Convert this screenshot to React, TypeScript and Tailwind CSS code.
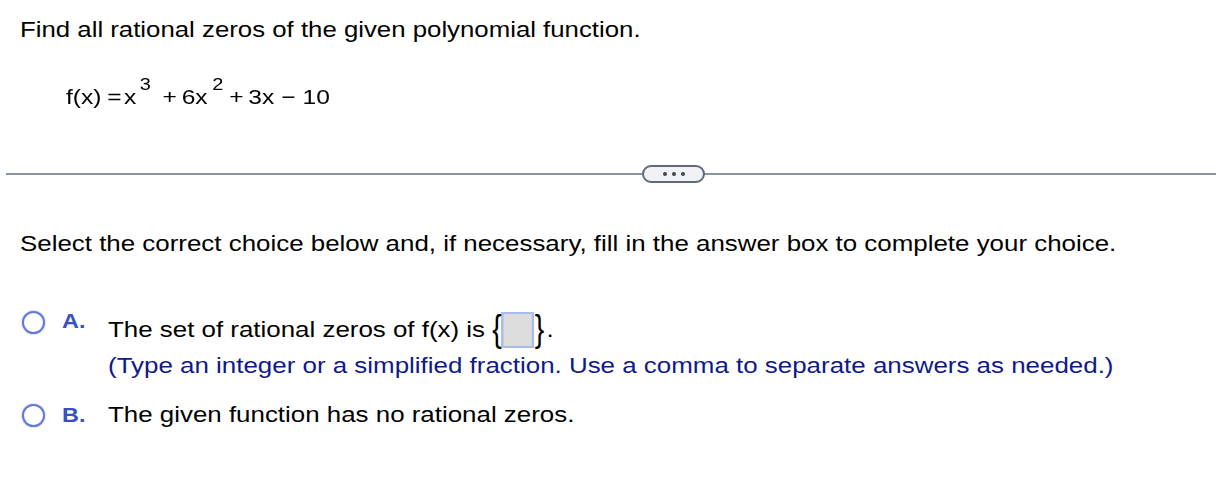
import React from "react";

const font = { fontFamily: '"Liberation Sans", Arial, Helvetica, sans-serif' };

function Radio() {
  return (
    <div className="w-[23px] h-[23px] rounded-full border-2 border-[#6579d6] bg-white shadow-[0_0_2px_rgba(90,110,210,0.6)]" />
  );
}

export default function App() {
  return (
    <div className="w-[1216px] h-[484px] bg-white text-black overflow-hidden" style={font}>
      <div className="pl-[20px] pt-[17px]">
        <div className="origin-left scale-x-[1.172] text-[22px] leading-[26px] whitespace-nowrap">
          Find all rational zeros of the given polynomial function.
        </div>
      </div>
      <div className="pl-[66px] mt-[42px]">
        <div className="origin-left scale-x-[1.17] text-[21px] leading-[24px] flex items-baseline whitespace-pre">
          <span>f(x)</span>
          <span className="ml-[5px]">=</span>
          <span className="ml-[2px]">x</span>
          <span className="ml-[3px] text-[17px] relative top-[-14px]">3</span>
          <span className="ml-[10px]">+</span>
          <span className="ml-[4px]">6x</span>
          <span className="ml-[4px] text-[17px] relative top-[-14px]">2</span>
          <span className="ml-[5px]">+</span>
          <span className="ml-[4px]">3x</span>
          <span className="ml-[6px]">−</span>
          <span className="ml-[6px]">10</span>
        </div>
      </div>
      <div className="mt-[53px] relative h-[20px] flex items-center">
        <div className="ml-[6px] flex-1 h-[1.5px] bg-[#8b94a2]" />
        <div className="absolute left-[642px] top-[1px] w-[63px] h-[18px] rounded-full border-2 border-[#5f6b7a] bg-[#f0f2f5] flex items-center justify-center gap-[5px]">
          <span className="w-[4px] h-[4px] rounded-full bg-[#3d4652]" />
          <span className="w-[4px] h-[4px] rounded-full bg-[#3d4652]" />
          <span className="w-[4px] h-[4px] rounded-full bg-[#3d4652]" />
        </div>
      </div>
      <div className="pl-[20px] mt-[47px]">
        <div className="origin-left scale-x-[1.177] text-[22px] leading-[26px] whitespace-nowrap">
          Select the correct choice below and, if necessary, fill in the answer box to complete your choice.
        </div>
      </div>
      <div className="mt-[54px] flex">
        <div className="pl-[22px] w-[62px]">
          <Radio />
        </div>
        <div className="w-[46px]">
          <div className="origin-left scale-x-[1.17] text-[20px] font-bold text-[#3b4fc4] leading-[20px]">A.</div>
        </div>
        <div className="text-[22px] leading-[26px] whitespace-nowrap">
          <div className="origin-left scale-x-[1.177] flex items-center h-[38px]">
            <span>The set of rational zeros of f(x) is&nbsp;</span>
            <span className="inline-block text-[24px] leading-none scale-y-[1.55] relative top-[-1px]">{"{"}</span>
            <span className="w-[28px] h-[36px] bg-[#dcdcdc] border-2 border-[#a9bde9]" />
            <span className="inline-block text-[24px] leading-none scale-y-[1.55] relative top-[-1px]">{"}"}</span>
            <span className="ml-[2px]">.</span>
          </div>
          <div className="origin-left scale-x-[1.178] text-[#0f1a8a] mt-[4px]">
            (Type an integer or a simplified fraction. Use a comma to separate answers as needed.)
          </div>
        </div>
      </div>
      <div className="mt-[23px] flex items-center">
        <div className="pl-[22px] w-[62px]">
          <Radio />
        </div>
        <div className="w-[46px]">
          <div className="origin-left scale-x-[1.17] text-[20px] font-bold text-[#3b4fc4] leading-[26px]">B.</div>
        </div>
        <div className="text-[22px] leading-[26px] whitespace-nowrap">
          <div className="origin-left scale-x-[1.177]">The given function has no rational zeros.</div>
        </div>
      </div>
    </div>
  );
}
